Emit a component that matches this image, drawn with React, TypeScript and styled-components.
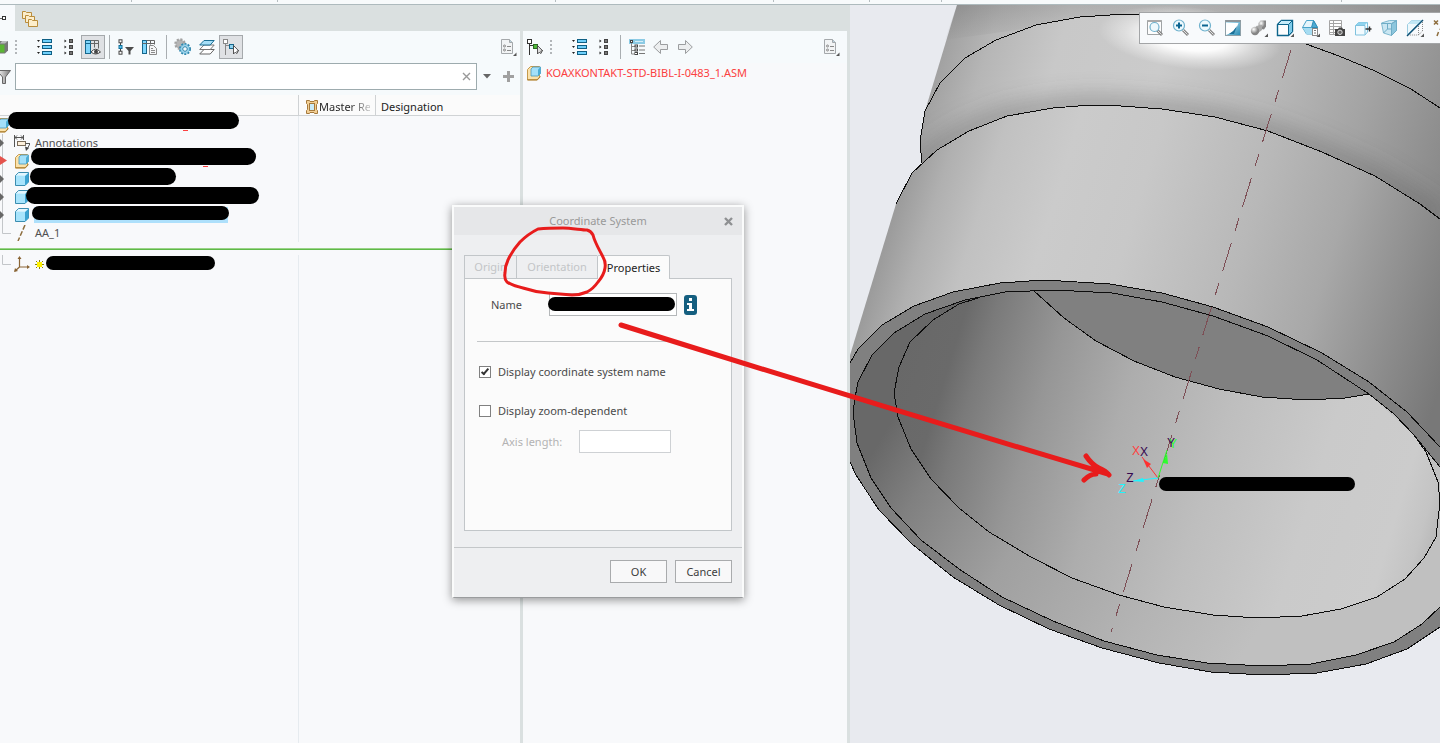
import React from "react";
import styled, { createGlobalStyle, css } from "styled-components";

const Global = createGlobalStyle`
  *, *::before, *::after { box-sizing: border-box; }
  html, body { margin: 0; padding: 0; }
  body {
    font-family: "Noto Sans", "Open Sans", sans-serif;
    font-size: 11px;
    line-height: 16px;
    color: #444;
    background: #f8fafc;
    overflow: hidden;
  }
  button, input { font: inherit; color: inherit; }
  svg { display: block; flex: none; }
`;

/* ---------- layout ---------- */

const Page = styled.div`
  position: relative;
  display: flex;
  flex-direction: column;
  height: 100vh;
  overflow: hidden;
`;

const RibbonEdge = styled.div`
  flex: none;
  height: 5px;
  background: #f7fafb;
  border-bottom: 1px solid #adbabd;
`;

const Workspace = styled.main`
  flex: 1;
  display: flex;
  min-height: 0;
`;

const Navigator = styled.section`
  flex: 0 0 850px;
  display: flex;
  flex-direction: column;
  background: #dae0e0;
`;

const NavigatorTabs = styled.div`
  flex: none;
  display: flex;
  height: 26px;
`;

const NavigatorTab = styled.button<{ $active?: boolean; $width: number }>`
  display: flex;
  align-items: center;
  justify-content: center;
  width: ${(p) => p.$width}px;
  padding: 0;
  border: 0;
  overflow: hidden;
  background: ${(p) => (p.$active ? "#f7fafc" : "transparent")};
`;

const Panels = styled.div`
  flex: 1;
  display: flex;
  gap: 3px;
  padding-right: 3px;
  min-height: 0;
`;

const Panel = styled.section<{ $grow?: boolean }>`
  flex: ${(p) => (p.$grow ? "1" : "0 0 520px")};
  display: flex;
  flex-direction: column;
  min-width: 0;
  background: #f8f9fb;
  overflow: hidden;
`;

const Toolbar = styled.div<{ $end?: number }>`
  flex: none;
  display: flex;
  align-items: center;
  height: 32px;
  padding-right: ${(p) => p.$end ?? 0}px;
  background: #f6fafc;
`;

const Spacer = styled.span`
  flex: 1;
`;

const ToolButton = styled.button<{ $pressed?: boolean }>`
  display: flex;
  align-items: center;
  justify-content: center;
  width: 24px;
  height: 24px;
  padding: 0;
  background: transparent;
  border: 1px solid transparent;
  ${(p) =>
    p.$pressed &&
    css`
      background: #dfe1e4;
      border-color: #a5a9ac;
    `}
`;

const Separator = styled.span`
  width: 1px;
  height: 24px;
  margin: 0 4px;
  background: #a9aeb1;
`;

const Grip = styled.span<{ $before: number; $after: number }>`
  width: 2px;
  height: 14px;
  margin: 0 ${(p) => p.$after}px 0 ${(p) => p.$before}px;
  background: repeating-linear-gradient(#b2b6b9 0 2px, transparent 2px 4px);
`;

const EdgeIcon = styled.span`
  width: 9px;
  overflow: hidden;
`;

/* ---------- search ---------- */

const SearchRow = styled.div`
  flex: none;
  display: flex;
  align-items: center;
  height: 32px;
  padding-bottom: 5px;
  background: #f6fafc;
`;

const SearchBox = styled.div`
  display: flex;
  align-items: center;
  flex: 1;
  height: 27px;
  margin-left: 4px;
  background: #fff;
  border: 1px solid #9dabae;
`;

const SearchInput = styled.input`
  flex: 1;
  min-width: 0;
  height: 20px;
  padding: 0 6px;
  border: 0;
  outline: 0;
  background: transparent;
`;

const GlyphButton = styled.button<{ $width: number }>`
  display: flex;
  align-items: center;
  justify-content: center;
  width: ${(p) => p.$width}px;
  height: 20px;
  padding: 0;
  border: 0;
  background: transparent;
`;

/* ---------- tree ---------- */

const Tree = styled.table`
  flex: 1;
  width: 100%;
  height: 100%;
  border-collapse: separate;
  border-spacing: 0;
  table-layout: fixed;
`;

const HeadCell = styled.th`
  height: 21px;
  padding: 3px 5px 0;
  font-weight: 400;
  text-align: left;
  color: #222;
  background: #fbfbfb;
  border-bottom: 1px solid #d0d3d5;
  border-right: 1px solid #cfd2d4;
  &:last-child { border-right: 0; }
`;

const HeadLabel = styled.span`
  display: flex;
  align-items: center;
  height: 16px;
  gap: 1px;
  padding-left: 2px;
  white-space: nowrap;
  overflow: hidden;
`;

const Faded = styled.span`
  background: linear-gradient(90deg, #222 30px, #c4c4c4 50px);
  background-clip: text;
  color: transparent;
`;

const TreeCell = styled.td`
  height: 18px;
  padding: 0;
  &:first-child { border-right: 1px solid #e6ebef; }
`;

const TreeItem = styled.div`
  display: flex;
  align-items: center;
  height: 18px;
`;

const ItemLabel = styled.span`
  margin-left: 5px;
  color: #505050;
`;

const InsertCell = styled.td`
  height: 13px;
  padding: 0;
`;

const InsertLine = styled.div`
  height: 2px;
  background: #5fb947;
  border-top: 1px solid #9ad388;
`;

const FillCell = styled.td`
  padding: 0;
  &:first-child { border-right: 1px solid #e6ebef; }
`;

const ModelPath = styled.div`
  display: flex;
  align-items: center;
  gap: 4px;
  height: 20px;
  padding-left: 3px;
  color: #fb4040;
`;

/* ---------- graphics ---------- */

const Viewport = styled.section`
  position: relative;
  flex: 1;
  min-width: 0;
  background: #e8eaef;
  overflow: hidden;
`;

const Scene = styled.svg`
  width: 100%;
  height: 100%;
`;

const ViewToolbar = styled.div`
  position: absolute;
  top: 7px;
  left: 289px;
  right: 0;
  display: flex;
  align-items: center;
  height: 32px;
  padding-left: 3px;
  gap: 2px;
  background: #f8fafc;
  border: 1px solid #a3a5a7;
  border-right: 0;
  overflow: hidden;
  & > button { flex: none; }
`;

/* ---------- dialog ---------- */

const Dialog = styled.section`
  position: absolute;
  isolation: isolate;
  left: 452px;
  top: 205px;
  width: 292px;
  background: #eeeff1;
  border: 2px solid #fafbfb;
  border-bottom: 1px solid #9a9c9e;
  box-shadow: 0 2px 9px rgba(0, 0, 0, 0.42);
`;

const TitleBar = styled.header`
  display: grid;
  grid-template-columns: 28px 1fr 28px;
  align-items: center;
  height: 28px;
  background: #e6e7e9;
  color: #999;
`;

const Title = styled.h1`
  margin: 0;
  font-size: 11px;
  font-weight: 400;
  text-align: center;
`;

const DialogBody = styled.div`
  padding: 20px 10px 16px;
`;

const TabList = styled.div`
  display: flex;
  height: 23px;
`;

const Tab = styled.button<{ $active?: boolean; $width: number }>`
  width: ${(p) => p.$width}px;
  height: ${(p) => (p.$active ? 24 : 23)}px;
  padding: 0;
  white-space: nowrap;
  color: ${(p) => (p.$active ? "#222" : "#c3c5c7")};
  background: ${(p) => (p.$active ? "#fbfbfb" : "#eeeff1")};
  border: 1px solid #c2c6c9;
  border-bottom: 0;
  border-right-width: ${(p) => (p.$active ? 1 : 0)}px;
  border-radius: ${(p) => (p.$active ? "2px 2px 0 0" : "0")};
  z-index: ${(p) => (p.$active ? 1 : 0)};
`;

const TabPanel = styled.div`
  height: 253px;
  padding: 14px 12px;
  background: #fbfbfb;
  border: 1px solid #c2c6c9;
`;

const NameRow = styled.div`
  display: flex;
  align-items: center;
  height: 23px;
  padding-left: 14px;
`;

const FieldLabel = styled.label<{ $width: number; $muted?: boolean }>`
  width: ${(p) => p.$width}px;
  color: ${(p) => (p.$muted ? "#b3b3b3" : "#4a4a4a")};
`;

const TextField = styled.input<{ $width: number }>`
  width: ${(p) => p.$width}px;
  height: 23px;
  padding: 0 4px;
  background: #fff;
  border: 1px solid ${(p) => (p.disabled ? "#ced1d4" : "#b4b7b9")};
  border-radius: 0;
  outline: 0;
`;

const InfoButton = styled.button`
  display: flex;
  align-items: center;
  justify-content: center;
  width: 13px;
  height: 20px;
  margin-left: 7px;
  padding: 0;
  border: 0;
  border-radius: 3px;
  background: #155f80;
`;

const Rule = styled.hr`
  width: 192px;
  height: 1px;
  margin: 25px 0 21px;
  border: 0;
  background: #c4c7c9;
`;

const CheckRow = styled.label`
  display: flex;
  align-items: center;
  gap: 7px;
  height: 18px;
  padding-left: 2px;
  color: #4a4a4a;
`;

const Options = styled.div`
  display: grid;
  gap: 21px;
`;

const CheckBox = styled.input`
  appearance: none;
  width: 12px;
  height: 12px;
  margin: 0;
  background: #fff;
  border: 1px solid #808080;
  &:checked::after {
    content: "";
    display: block;
    width: 4px;
    height: 8px;
    margin: 0 0 0 3px;
    border: solid #333;
    border-width: 0 2px 2px 0;
    transform: rotate(40deg);
  }
`;

const AxisRow = styled.div`
  display: flex;
  align-items: center;
  padding: 10px 0 0 25px;
`;

const DialogFooter = styled.footer`
  display: flex;
  justify-content: flex-end;
  gap: 8px;
  padding: 12px 10px 14px;
  border-top: 1px solid #c4c7c9;
`;

const PushButton = styled.button`
  width: 57px;
  height: 23px;
  padding: 0;
  background: #f8f8f9;
  border: 1px solid #a9abad;
  color: #3c3c3c;
`;

const Markup = styled.svg`
  position: absolute;
  inset: 0;
  width: 100%;
  height: 100%;
  pointer-events: none;
`;

/* ---------- icons ---------- */

const Icon = ({ children, w = 16, h = 16, box }: { children: React.ReactNode; w?: number; h?: number; box?: string }) => (
  <svg width={w} height={h} viewBox={box ?? `0 0 ${w} ${h}`} fill="none" aria-hidden="true">
    {children}
  </svg>
);

const ExpandAll = () => (
  <Icon>
    {[1, 7, 13].map((y) => (
      <g key={y}>
        <path d={`M0 ${y}h3l-1.500 2z`} fill="#222" />
        <rect x="5.500" y={y - 0.5} width="9" height="3" fill="#6fd0fb" stroke="#0f5f84" />
      </g>
    ))}
  </Icon>
);

const CollapseAll = () => (
  <Icon>
    {[1, 7, 13].map((y) => (
      <g key={y}>
        <path d={`M3.500 ${y - 0.5}v3l2-1.500z`} fill="#222" />
        <rect x="8.500" y={y - 0.5} width="3" height="3" fill="#777" stroke="#444" />
      </g>
    ))}
  </Icon>
);

const ColumnsEye = () => (
  <Icon>
    <rect x=".5" y="1.500" width="5" height="13" fill="#7fd5fb" stroke="#16678c" />
    <path d="M.5 4.500h5" stroke="#16678c" />
    <path d="M5.500 1.500h8v8M5.500 4.500h8M9.500 1.500v7" stroke="#666" />
    <path d="M6 13q4.500-5.500 9.500 0-5 4-9.500 0z" fill="#fff" stroke="#444" />
    <circle cx="11" cy="12.700" r="2" fill="#444" />
  </Icon>
);

const TreeFilter = () => (
  <Icon>
    <path d="M2.500 1v14" stroke="#444" />
    <rect x="1" y=".8" width="3" height="3" fill="#fff" stroke="#444" />
    <rect x="1" y="6.500" width="3" height="3" fill="#5cc4f0" stroke="#0f6f99" />
    <rect x="1" y="12.200" width="3" height="3" fill="#fff" stroke="#444" />
    <path d="M7 8h9l-3.500 4v3.500h-2V12z" fill="#4c4c4c" />
  </Icon>
);

const ColumnsPage = () => (
  <Icon>
    <rect x=".5" y="1.500" width="4" height="13" fill="#7fd5fb" stroke="#16678c" />
    <path d="M4.500 1.500h8v4M4.500 4.500h8M8.500 1.500v4M.5 4.500h4" stroke="#666" />
    <path d="M7.500 6.500h4l3 3v6h-7z" fill="#f5f6f7" stroke="#8a8a8a" />
    <path d="M9 9.500h2M9 11.500h4M9 13.500h4" stroke="#8a8a8a" />
  </Icon>
);

const Gears = () => (
  <Icon w={18} h={18}>
    <circle cx="6" cy="6" r="4.500" fill="#b5b5b5" stroke="#a2a2a2" strokeWidth="2.500" strokeDasharray="2 1.500" />
    <circle cx="11" cy="11" r="5" fill="#c5eafa" stroke="#3288ae" strokeWidth="2" strokeDasharray="2 1.200" />
    <circle cx="11" cy="11" r="4.200" fill="#b4e2f6" stroke="#5fb0d2" strokeWidth=".8" />
    <circle cx="11" cy="11" r="2.300" fill="#f4f9fb" stroke="#2d82a8" />
  </Icon>
);

const Layers = () => (
  <Icon>
    <path d="M.7 15h10.500l4-4.500H5z" fill="#fff" stroke="#666" />
    <path d="M.7 10.500h10.500l4-4.500H5z" fill="#fff" stroke="#777" />
    <path d="M.7 6h10.500l4-4.500H5z" fill="#a6dff8" stroke="#1b6f95" />
  </Icon>
);

const TreeCursor = ({ green }: { green?: boolean }) => (
  <Icon>
    <path d="M2.500 4v12M2.500 6.500h5" stroke={green ? "#333" : "#888"} />
    <rect x=".5" y=".5" width="4" height="4" fill="#fff" stroke={green ? "#333" : "#888"} />
    <rect x="6.500" y="5.500" width="4" height="4" fill={green ? "#4eb83a" : "#8fd3f0"} stroke={green ? "#2b6b20" : "#16678c"} />
    <path d="M10.500 6.500v8.500l2-2 1 1.500 1-.5-.6-2h2z" fill={green ? "#ddd" : "#fff"} stroke="#444" strokeWidth=".9" />
  </Icon>
);

const SettingsPage = () => (
  <Icon w={18} h={18}>
    <path d="M2.500 1.500h8l3 3v11h-11z" fill="#f2f4f5" stroke="#a4a8ab" />
    <path d="M10.500 1.500v3h3" fill="#b9d2de" stroke="#a4a8ab" />
    <circle cx="5.500" cy="8" r="1" stroke="#888" />
    <circle cx="5.500" cy="12" r="1" stroke="#888" />
    <path d="M8 8.500h4M8 12.500h4" stroke="#888" />
    <path d="M17.500 14.500V18H14z" fill="#555" />
  </Icon>
);

const DetailTree = () => (
  <Icon>
    <rect x="0" y="0" width="16" height="5" fill="#8ccbe5" />
    <rect x="1.500" y="1.500" width="2" height="2" fill="#fff" stroke="#444" />
    <path d="M2.500 4v11M2.500 7.500h4M2.500 11.500h4M2.500 15h4" stroke="#888" />
    {[6.5, 10.5, 14].map((y) => (
      <g key={y}>
        <rect x="6" y={y - 0.5} width="2.500" height="2" fill="#fff" stroke="#444" />
        <path d={`M10 ${y + 0.5}h6`} stroke="#777" />
      </g>
    ))}
    <path d="M6 2.500h8" stroke="#d5eef8" />
  </Icon>
);

const Arrow = ({ back }: { back?: boolean }) => (
  <Icon>
    <path
      d={back ? "M.7 8l6.800-6.500v4h7v5h-7v4z" : "M15.300 8L8.500 1.500v4h-7v5h7v4z"}
      fill="#eceeef"
      stroke="#9b9d9f"
    />
  </Icon>
);

const FolderStack = () => (
  <Icon w={17} h={17}>
    {[
      [0.5, 1.5],
      [3.500, 5.500],
      [6.5, 9.5],
    ].map(([x, y]) => (
      <path key={x} d={`M${x} ${y}h3l1 1h5v6h-9z`} fill="#fdeecb" stroke="#b98d3c" />
    ))}
  </Icon>
);

const PartCube = () => (
  <Icon>
    <path d="M1.500 4.500l3-3h10v9.500l-3.500 3.500h-9.500z" fill="#a8e4fc" stroke="#3b8db0" />
    <path d="M11 5v9.500l3.500-3.500v-9.500z" fill="#3ba3d1" />
    <path d="M2 4.500l2.700-2.500h9.300l-3 2.800z" fill="#e2f6fe" />
  </Icon>
);

const AssemblyCube = () => (
  <Icon>
    <path d="M1.500 4.500l3-3h9v10.500l-2.500 3h-9.500z" fill="#fbe2ab" stroke="#c59a4c" />
    <path d="M1.500 14.800h10l3-3.300" stroke="#a87b2c" />
    <path d="M5 4l2-2h7.500v6.500l-2.500 2.500H5z" fill="#a3e0fa" stroke="#4c98b8" strokeWidth=".8" />
    <path d="M12 4.500V11l2.500-2.500V2z" fill="#4badd6" />
  </Icon>
);

const AnnotationIcon = () => (
  <Icon>
    <path d="M.5 0v12M9.500 0v5M.5 2.500h9M3 .5L1 2.500l2 2M7 .5l2 2-2 2" stroke="#555" />
    <rect x="3.500" y="6.500" width="8" height="4" fill="#fdf0dc" stroke="#7a6c5a" />
    <path d="M11.500 8.500H16l-2.500 5" stroke="#555" />
    <path d="M11 11.500l1 4.500 3-3z" fill="#444" />
  </Icon>
);

const AxisIcon = () => (
  <Icon>
    <path d="M11 0L4 16" stroke="#8d6d3d" strokeWidth="1.500" strokeDasharray="5 1.800" />
  </Icon>
);

const CsysIcon = () => (
  <Icon>
    <path d="M5.500 2v9h9M5.500 11L1 15" stroke="#8a6535" strokeWidth="1.200" />
    <path d="M5.500 0l2 3h-4zM16 11l-3-2v4zM0 16l1-4 3 3z" fill="#8a6535" />
  </Icon>
);

const Star = () => (
  <Icon w={9} h={9}>
    <path d="M4.500 0v9M0 4.500h9M1 1l7 7M8 1L1 8" stroke="#8a8400" />
    <rect x="2" y="2" width="5" height="5" fill="#fff200" />
  </Icon>
);

const MasterRep = () => (
  <Icon w={12} h={14}>
    <path d="M.5.5h3l.5 1h4l.5-1h3v3l-1 1v5l1 1v3h-3l-.5-1H4l-.5 1h-3v-3l1-1v-5l-1-1z" fill="#f3cf94" stroke="#a67a3c" />
    <rect x="3.500" y="3.500" width="5" height="7" fill="#c9ebfa" stroke="#a67a3c" />
  </Icon>
);

const GreenCube = () => (
  <Icon w={9} h={14}>
    <path d="M0 1h7l1 0v9.500L5 13.500H0z" fill="#777" />
    <path d="M0 4.500h4.500v8H0z" fill="#5bb534" />
    <path d="M0 3.500L2 1h6L5 3.500z" fill="#b9bcbc" />
  </Icon>
);

const Funnel = () => (
  <Icon w={11} h={16} box="4 0 11 16">
    <defs>
      <linearGradient id="funnel">
        <stop offset="0" stopColor="#fff" />
        <stop offset="1" stopColor="#777" />
      </linearGradient>
    </defs>
    <path d="M1 1.500h13.500L9.500 8v6.500h-3V8z" fill="url(#funnel)" stroke="#666" />
  </Icon>
);

const Cross = ({ bold }: { bold?: boolean }) => (
  <Icon w={9} h={9}>
    <path d="M1 1l7 7M8 1L1 8" stroke={bold ? "#8e9092" : "#999"} strokeWidth={bold ? 2.4 : 1.4} />
  </Icon>
);

const Corner = () => <path d="M19 15.500V19h-3.500z" fill="#555" />;

const Lens = ({ sign }: { sign?: "plus" | "minus" | "box" }) => (
  <Icon w={20} h={20}>
    {sign === "box" && <path d="M2.500 2.500h14v14h-14z" fill="#fdfdfd" stroke="#9fa3a5" />}
    {sign === "box" && <path d="M2.500 3h14" stroke="#aaa" strokeWidth="2" />}
    <path d="M12 12l5 5" stroke="#868686" strokeWidth="3" />
    <path d="M12 12l4.500 4.500" stroke="#e4e4e4" />
    <circle cx={sign === "box" ? 9.5 : 8} cy={sign === "box" ? 9 : 7.5} r={sign === "box" ? 4.5 : 5.5} fill="#eef9fd" stroke="#6fb1cd" strokeWidth="1.200" />
    {sign !== "box" && <path d={sign === "plus" ? "M5 7.500h6M8 4.500v6" : "M5 7.500h6"} stroke="#0b6491" strokeWidth="2" />}
  </Icon>
);

const Repaint = () => (
  <Icon w={20} h={20}>
    <defs>
      <linearGradient id="repaint" x2="1" y2="1">
        <stop offset="0" stopColor="#d5f0fa" />
        <stop offset="1" stopColor="#2389b3" />
      </linearGradient>
    </defs>
    <rect x="2.500" y="2.500" width="15" height="15" fill="url(#repaint)" stroke="#8ea0a8" />
    <path d="M2.500 3h15" stroke="#8c9499" strokeWidth="2" />
    <path d="M3 5h12.500q-2.500 9-12.500 12z" fill="#fff" />
    <path d="M14 8q-3 5-8 8h5z" fill="#1a7199" />
  </Icon>
);

const Shading = () => (
  <Icon w={20} h={20}>
    <defs>
      <radialGradient id="ball" cx=".35" cy=".3">
        <stop offset="0" stopColor="#fff" />
        <stop offset="1" stopColor="#858585" />
      </radialGradient>
    </defs>
    <path d="M9.500 5l2-2.500H17v6l-2 3-5.500-1z" fill="url(#ball)" />
    <path d="M7 8l6-1v5l-4 3z" fill="#a9a9a9" />
    <circle cx="6" cy="13" r="4.200" fill="url(#ball)" />
    <Corner />
  </Icon>
);

const Box3D = () => (
  <Icon w={20} h={20}>
    <path d="M2.500 6.500l4-4h11v11l-4 4h-11z" fill="#fbfdfe" stroke="#0d658c" strokeWidth="1.400" />
    <path d="M13.500 6.500v11l4-4v-11z" fill="#7ecbea" stroke="#0d658c" />
    <path d="M2.500 6.500h11l4-4h-11z" fill="#c4ecfa" stroke="#0d658c" />
    <Corner />
  </Icon>
);

const SavedView = () => (
  <Icon w={20} h={20}>
    <path d="M5.500 2.500h7l4 7-4 6.500h-7l-4-6.500z" fill="#e5f5fc" stroke="#4aa3c9" />
    <path d="M12.500 2.500l4 7h-6z" fill="#4fabd3" stroke="#2e8db8" />
    <path d="M1.500 9.500h9" stroke="#4aa3c9" />
    <path d="M2 10h9v6H5.500z" fill="#a5dcf2" />
    <rect x="11.500" y="10.500" width="5" height="7" fill="#fff" stroke="#888" />
    <path d="M13 12.500h2M13 15h2" stroke="#777" />
    <Corner />
  </Icon>
);

const ViewManager = () => (
  <Icon w={20} h={20}>
    <path d="M2.500 2.500h12v14h-12zM2.500 5.500h12M2.500 8.500h12M2.500 11.500h6M2.500 14.500h6M6.500 2.500v14" stroke="#a5a5a5" fill="#fff" />
    <path d="M8 11h3l1-1.500h3l1 1.500h2v7H8z" fill="#444" />
    <circle cx="13" cy="14.300" r="2.200" fill="#666" stroke="#ddd" />
  </Icon>
);

const BoxPlus = () => (
  <Icon w={20} h={20}>
    <path d="M2.500 7.500l3-3h9v9.500l-2.500 3h-9.500z" fill="#f2fafe" stroke="#7fc2de" />
    <path d="M2.500 7.500h9.500v9" stroke="#7fc2de" />
    <path d="M3 7l2.500-2.500h9L12 7z" fill="#8fd3ee" />
    <path d="M12.500 11h6M16.500 8.500v5" stroke="#333" strokeWidth="1.400" />
  </Icon>
);

const Perspective = () => (
  <Icon w={20} h={20}>
    <path d="M2.500 5l8-2.500h7v10l-5 5-8-2.500z" fill="#c9e6f2" stroke="#7fb9d0" />
    <path d="M12.500 6v11.500l5-5v-10z" fill="#8cc6dd" stroke="#6fadc7" />
    <path d="M2.500 5.500h10l5-3M4.500 15l4-4h4M8.500 11V5" stroke="#6fadc7" />
  </Icon>
);

const DatumPlanes = () => (
  <Icon w={20} h={20}>
    <path d="M2.500 6.500l4-4h10l-14 14z" fill="#eef8fc" stroke="#9ccce0" />
    <path d="M3 6l3.500-3.500h10L13 6z" fill="#c1e7f5" />
    <path d="M17.500 4v9l-4 4H4M13.500 8v9" stroke="#888" strokeDasharray="1 1" />
    <path d="M2 18L18 2" stroke="#0d4f73" strokeWidth="1.400" />
    <Corner />
  </Icon>
);

const DatumDisplay = () => (
  <Icon w={20} h={20}>
    <path d="M3 2.500l4 4M7 2.500l-4 4M6 18l1.500-4M9 12l2-5" stroke="#8d6d3d" strokeWidth="1.500" />
  </Icon>
);

/* ---------- 3D model ---------- */

const upperEdge =
  "922,163 920,143 921,135 925,111 940,83 965,58 996,40 1036,25 1080,17 1110,15 1130,14 1160,15 1205,20 1255,30 1306,44 1339,56 1375,71 1411,89 1440,108";
const collarEdge =
  "896,204 898,200 912,173 937,150 969,131 1007,116 1053,108 1091,105 1121,106 1162,109 1215,117 1268,131 1322,152 1375,176 1420,204 1440,219";
const rimOuterTop =
  "840,388 850,363 858,349 882,325 914,306 953,292 1000,283 1044,280 1061,281 1110,284 1162,293 1213,307 1268,327 1322,353 1369,382 1407,412 1440,447";
const rimOuterBottom =
  "1440,627 1407,649 1366,664 1317,673 1264,675 1211,672 1159,663 1102,648 1049,629 999,605 953,577 912,544 879,510 856,475 850,462 840,435";
const rimInner =
  "1460,500 1440,467 1414,435 1394,414 1369,394 1317,360 1268,336 1213,316 1162,302 1112,293 1055,290 1005,292 965,300 925,314 894,333 872,355 858,382 855,398 853,412 857,443 871,478 891,508 921,540 959,569 1002,597 1053,621 1104,641 1157,655 1207,663 1264,666 1311,664 1356,655 1394,642 1422,624 1440,607 1460,580";
const boreEdge =
  "1414,435 1426,452 1438,482 1440,502 1436,537 1424,558 1405,579 1377,597 1341,609 1302,616 1258,618 1213,615 1164,607 1119,595 1072,578 1031,557 989,532 959,508 931,479 911,449 898,417 894,393 899,367 910,342 933,320 959,304 978,298";
const discTop = "1369,394 1317,360 1268,336 1213,316 1162,302 1112,293 1055,290 1034,291";
const discBottom = "1034,291 1064,318 1096,341 1134,361 1175,377 1219,389 1262,397 1307,400 1345,398 1369,394";

type Stops = [number, string][];
const Shade = ({ id, x1, y1, x2, y2, stops }: { id: string; x1: number; y1: number; x2: number; y2: number; stops: Stops }) => (
  <linearGradient id={id} gradientUnits="userSpaceOnUse" x1={x1} y1={y1} x2={x2} y2={y2}>
    {stops.map(([o, c]) => (
      <stop key={o} offset={o} stopColor={c} />
    ))}
  </linearGradient>
);

const Model = () => (
  <Scene viewBox="850 5 590 738" preserveAspectRatio="xMinYMin slice" role="img" aria-label="Shaded model of a coaxial contact sleeve">
    <defs>
      <Shade id="body" x1={878} y1={270} x2={1424} y2={438}
        stops={[[0, "#9c9c9c"], [0.06, "#b0b0b0"], [0.14, "#c1c1c1"], [0.26, "#cbcbcb"], [0.4, "#c8c8c8"], [0.6, "#b8b8b8"], [0.75, "#a8a8a8"], [0.88, "#8f8f8f"], [1, "#787878"]]} />
      <Shade id="neck" x1={925} y1={100} x2={1465} y2={266}
        stops={[[0, "#a0a0a0"], [0.08, "#b6b6b6"], [0.2, "#c8c8c8"], [0.38, "#cbcbcb"], [0.58, "#b8b8b8"], [0.75, "#a3a3a3"], [0.9, "#8c8c8c"], [1, "#7c7c7c"]]} />
      <Shade id="bore" x1={890} y1={380} x2={1440} y2={549}
        stops={[[0, "#686868"], [0.09, "#6a6a6a"], [0.14, "#7a7a7a"], [0.26, "#969696"], [0.4, "#adadad"], [0.58, "#bebebe"], [0.76, "#cacaca"], [0.91, "#cccccc"], [0.96, "#c4c4c4"], [1, "#b4b4b4"]]} />
      <Shade id="chamfer" x1={880} y1={440} x2={1240} y2={660}
        stops={[[0, "#686868"], [0.14, "#808080"], [0.4, "#a0a0a0"], [0.75, "#b4b4b4"], [1, "#c0c0c0"]]} />
      <linearGradient id="top-shade" x1="0" x2="0" y1="0" y2="1">
        <stop offset="0" stopColor="#555" stopOpacity=".22" />
        <stop offset="1" stopColor="#555" stopOpacity="0" />
      </linearGradient>
      <radialGradient id="glint">
        <stop offset="0" stopColor="#fff" />
        <stop offset=".4" stopColor="#fff" stopOpacity=".95" />
        <stop offset=".7" stopColor="#fff" stopOpacity=".4" />
        <stop offset="1" stopColor="#fff" stopOpacity="0" />
      </radialGradient>
      <filter id="soft" x="-20%" y="-40%" width="140%" height="180%">
        <feGaussianBlur stdDeviation="11" />
      </filter>
      <clipPath id="neck-clip">
        <polygon points={`${upperEdge} 1440,230 1375,176 896,204`} />
      </clipPath>
    </defs>

    <polygon points="957,5 1440,5 1440,260 925,150 925,111" fill="url(#neck)" />
    <polygon points="957,5 1440,5 1440,45 1300,28 1130,14 945,40" fill="url(#top-shade)" />
    <polygon points={`${upperEdge} 1440,240 1000,200 922,163`} fill="url(#neck)" />
    <g clipPath="url(#neck-clip)">
      <polyline points={collarEdge} stroke="#555" strokeOpacity=".42" strokeWidth="18" fill="none" filter="url(#soft)" />
    </g>
    <ellipse cx="1190" cy="38" rx="92" ry="31" fill="url(#glint)" transform="rotate(6 1190 38)" />

    <polygon points={`${collarEdge} 1440,600 1100,500 840,388`} fill="url(#body)" />
    <polygon points={`${rimOuterTop} 1460,480 1460,600 ${rimOuterBottom}`} fill="#808080" />
    <polygon points={rimInner} fill="url(#chamfer)" />
    <polygon points={boreEdge} fill="url(#bore)" />
    <polygon points="978,298 1005,292 1055,290 1112,293 1162,302 1213,316 1268,336 1317,360 1369,394 1414,435 1100,420" fill="url(#bore)" />
    <polygon points={`${discTop} ${discBottom}`} fill="#808080" />

    <g fill="none" stroke="#0c0c0c" strokeWidth="1" shapeRendering="crispEdges">
      <polyline points={upperEdge} />
      <polyline points={collarEdge} />
      <polyline points={rimOuterTop} />
      <polyline points={rimOuterBottom} />
      <polyline points={rimInner} />
      <polyline points={boreEdge} />
      <polyline points={discBottom} />
    </g>

    <path d="M1291 50L1111 632" stroke="#7d4e55" strokeDasharray="29.500 12.500 12.500 12.700" fill="none" shapeRendering="crispEdges" />

    <g fontFamily="Liberation Sans, sans-serif" fontSize="12" textAnchor="middle">
      <path d="M1158 478l-16-21" stroke="#ff3030" />
      <path d="M1143 459l8 5-4 4z" fill="#ff3030" />
      <path d="M1158 478l9-28" stroke="#2dff2d" />
      <path d="M1167 453l1 11-5-1z" fill="#2dff2d" />
      <path d="M1158 478l-25 3" stroke="#20f4ff" />
      <path d="M1133 481l10-3 1 4z" fill="#20f4ff" />
      <text x="1136" y="455" fill="#ff4040">X</text>
      <text x="1144" y="456" fill="#35064f">X</text>
      <text x="1173" y="448" fill="#2dff2d">Y</text>
      <text x="1171" y="447" fill="#35064f">Y</text>
      <text x="1130" y="482" fill="#35064f">Z</text>
      <text x="1122" y="493" fill="#20f4ff">Z</text>
    </g>
  </Scene>
);

/* ---------- tree rows ---------- */

const Gutter = ({ marker, end }: { marker?: string; end?: boolean }) => (
  <Icon w={14} h={18}>
    <path d={end ? "M2.500 0v9.500H11" : "M2.500 0v18"} stroke="#c3c6c9" />
    {marker && <path d={marker === "#e4534d" ? "M0 4v9l7-4.500z" : "M0 5v8l4-4z"} fill={marker} />}
  </Icon>
);

const rows = [
  { name: "Annotations", icon: <AnnotationIcon />, marker: "#666", text: true },
  { name: "Subassembly", icon: <AssemblyCube />, marker: "#e4534d" },
  { name: "Part 1", icon: <PartCube />, marker: "#666" },
  { name: "Part 2", icon: <PartCube />, marker: "#666" },
  { name: "Part 3", icon: <PartCube />, marker: "#666" },
  { name: "AA_1", icon: <AxisIcon />, end: true, text: true },
];

const ModelColumn = styled.col`
  width: 299px;
`;

const RepColumn = styled.col`
  width: 77px;
`;

const ModelTree = () => (
  <Tree>
    <colgroup>
      <ModelColumn />
      <RepColumn />
      <col />
    </colgroup>
    <thead>
      <tr>
        <HeadCell aria-label="Model" />
        <HeadCell>
          <HeadLabel><MasterRep /><Faded>Master Re</Faded></HeadLabel>
        </HeadCell>
        <HeadCell>Designation</HeadCell>
      </tr>
    </thead>
    <tbody>
      <tr>
        <TreeCell><TreeItem><Icon w={10} h={16} box="6 0 10 16"><AssemblyCube /></Icon></TreeItem></TreeCell>
        <TreeCell /><TreeCell />
      </tr>
      {rows.map((r) => (
        <tr key={r.name}>
          <TreeCell aria-label={r.name}>
            <TreeItem>
              <Gutter marker={r.marker} end={r.end} />
              {r.icon}
              {r.text && <ItemLabel>{r.name}</ItemLabel>}
            </TreeItem>
          </TreeCell>
          <TreeCell /><TreeCell />
        </tr>
      ))}
      <tr><InsertCell colSpan={3}><InsertLine /></InsertCell></tr>
      <tr>
        <TreeCell><TreeItem><Gutter end /><CsysIcon /><ItemLabel><Star /></ItemLabel></TreeItem></TreeCell>
        <TreeCell /><TreeCell />
      </tr>
      <tr><FillCell /><FillCell /><FillCell /></tr>
    </tbody>
  </Tree>
);

const bars = [
  [8, 112, 231, 17],
  [31, 148, 225, 17],
  [30, 168, 146, 17],
  [26, 187, 233, 17],
  [32, 206, 197, 14],
  [46, 256, 169, 14],
  [548, 297, 127, 14],
  [1159, 477, 196, 14],
];

const viewTools: [string, React.ReactNode][] = [
  ["Refit", <Lens sign="box" />],
  ["Zoom in", <Lens sign="plus" />],
  ["Zoom out", <Lens sign="minus" />],
  ["Repaint", <Repaint />],
  ["Rendering", <Shading />],
  ["Display style", <Box3D />],
  ["Saved orientations", <SavedView />],
  ["View manager", <ViewManager />],
  ["Add section", <BoxPlus />],
  ["Perspective", <Perspective />],
  ["Datum planes", <DatumPlanes />],
  ["Datum display", <DatumDisplay />],
];

export default function App() {
  return (
    <>
      <Global />
      <Page>
        <RibbonEdge>
          <svg width="100%" height="2" aria-hidden="true">
            {[131, 277, 555, 773, 869, 941, 1341].map((x) => (
              <rect key={x} x={x} y="0" width="1" height="2" fill="#b5bdc0" />
            ))}
          </svg>
        </RibbonEdge>
        <Workspace>
          <Navigator>
            <NavigatorTabs role="tablist">
              <NavigatorTab role="tab" aria-label="Model tree" $active $width={15}>
                <Icon w={15} h={16}>
                  <path d="M0 8.500h3" stroke="#666" />
                  <rect x="2.500" y="6.500" width="3" height="3" fill="#fff" stroke="#333" />
                </Icon>
              </NavigatorTab>
              <NavigatorTab role="tab" aria-label="Folder browser" $width={30}><FolderStack /></NavigatorTab>
            </NavigatorTabs>
            <Panels>
              <Panel>
                <Toolbar>
                  <EdgeIcon><GreenCube /></EdgeIcon>
                  <Grip $before={6} $after={16} />
                  <ToolButton aria-label="Expand all"><ExpandAll /></ToolButton>
                  <ToolButton aria-label="Collapse all"><CollapseAll /></ToolButton>
                  <ToolButton aria-label="Show columns" $pressed><ColumnsEye /></ToolButton>
                  <Separator />
                  <ToolButton aria-label="Tree filters"><TreeFilter /></ToolButton>
                  <ToolButton aria-label="Tree columns"><ColumnsPage /></ToolButton>
                  <Separator />
                  <ToolButton aria-label="Settings"><Gears /></ToolButton>
                  <ToolButton aria-label="Layers"><Layers /></ToolButton>
                  <ToolButton aria-label="Select in tree" $pressed><TreeCursor /></ToolButton>
                  <Spacer />
                  <ToolButton aria-label="Tree options"><SettingsPage /></ToolButton>
                </Toolbar>
                <SearchRow>
                  <Funnel />
                  <SearchBox>
                    <SearchInput aria-label="Filter tree" />
                    <GlyphButton aria-label="Clear" $width={20}><Cross /></GlyphButton>
                  </SearchBox>
                  <GlyphButton aria-label="Recent filters" $width={20}>
                    <Icon w={8} h={5}><path d="M0 0h8L4 4.500z" fill="#666" /></Icon>
                  </GlyphButton>
                  <GlyphButton aria-label="Add filter" $width={23}>
                    <Icon w={11} h={11}><path d="M5.500 0v11M0 5.500h11" stroke="#a0a0a0" strokeWidth="3" /></Icon>
                  </GlyphButton>
                </SearchRow>
                <ModelTree />
              </Panel>
              <Panel $grow>
                <Toolbar $end={4}>
                  <ToolButton aria-label="Select in tree"><TreeCursor green /></ToolButton>
                  <Grip $before={3} $after={16} />
                  <ToolButton aria-label="Expand all"><ExpandAll /></ToolButton>
                  <ToolButton aria-label="Collapse all"><CollapseAll /></ToolButton>
                  <Separator />
                  <ToolButton aria-label="Detail tree"><DetailTree /></ToolButton>
                  <ToolButton aria-label="Back"><Arrow back /></ToolButton>
                  <ToolButton aria-label="Forward"><Arrow /></ToolButton>
                  <Spacer />
                  <ToolButton aria-label="Tree options"><SettingsPage /></ToolButton>
                </Toolbar>
                <ModelPath><AssemblyCube />KOAXKONTAKT-STD-BIBL-I-0483_1.ASM</ModelPath>
              </Panel>
            </Panels>
          </Navigator>
          <Viewport>
            <Model />
            <ViewToolbar role="toolbar" aria-label="View">
              {viewTools.map(([name, icon]) => (
                <ToolButton key={name} aria-label={name}>{icon}</ToolButton>
              ))}
            </ViewToolbar>
          </Viewport>
        </Workspace>

        <Dialog role="dialog" aria-labelledby="dialog-title">
          <TitleBar>
            <span />
            <Title id="dialog-title">Coordinate System</Title>
            <GlyphButton aria-label="Close" $width={28}><Cross bold /></GlyphButton>
          </TitleBar>
          <DialogBody>
            <TabList role="tablist">
              <Tab role="tab" $width={52}>Origin</Tab>
              <Tab role="tab" $width={81}>Orientation</Tab>
              <Tab role="tab" aria-selected="true" $active $width={73}>Properties</Tab>
            </TabList>
            <TabPanel role="tabpanel">
              <NameRow>
                <FieldLabel htmlFor="csys-name" $width={58}>Name</FieldLabel>
                <TextField id="csys-name" $width={128} />
                <InfoButton aria-label="Information">
                  <Icon w={7} h={13}>
                    <path d="M2 0h3v3H2zM0 5h5v6h2v2H0v-2h2V7H0z" fill="#fff" />
                  </Icon>
                </InfoButton>
              </NameRow>
              <Rule />
              <Options>
                <CheckRow><CheckBox type="checkbox" defaultChecked />Display coordinate system name</CheckRow>
                <CheckRow><CheckBox type="checkbox" />Display zoom-dependent</CheckRow>
              </Options>
              <AxisRow>
                <FieldLabel htmlFor="axis-length" $width={77} $muted>Axis length:</FieldLabel>
                <TextField id="axis-length" $width={92} disabled />
              </AxisRow>
            </TabPanel>
          </DialogBody>
          <DialogFooter>
            <PushButton>OK</PushButton>
            <PushButton>Cancel</PushButton>
          </DialogFooter>
        </Dialog>

        <Markup aria-hidden="true">
          <path d="M183 130.500h5M203 166.500h5" stroke="#fb4040" />
          <rect x="34" y="207" width="194" height="16" fill="#aee0fb" />
          {bars.map(([x, y, w, h]) => (
            <rect key={`${x}-${y}`} x={x} y={y} width={w} height={h} rx={h / 2} fill="#000" />
          ))}
          <g fill="none" stroke="#e81c1c" strokeLinecap="round" strokeLinejoin="round">
            <path
              strokeWidth="3"
              d="M538 229C548 228 555 228 563 228S582 230 587 230Q591 231 593 235C595 243 599 249 603 257Q606 262 605 268Q604 275 598 282Q593 289 587 292Q580 295 572 295Q560 294 548 293Q535 292 523 288Q513 286 507 282Q504 279 505 273Q505 266 508 260Q512 251 520 242Q528 234 538 229z"
            />
            <path strokeWidth="5" d="M621 325Q860 400 1108 474M1086 456Q1092 465 1099 468T1109 475M1084 480Q1090 474 1096 474" />
          </g>
        </Markup>
      </Page>
    </>
  );
}
